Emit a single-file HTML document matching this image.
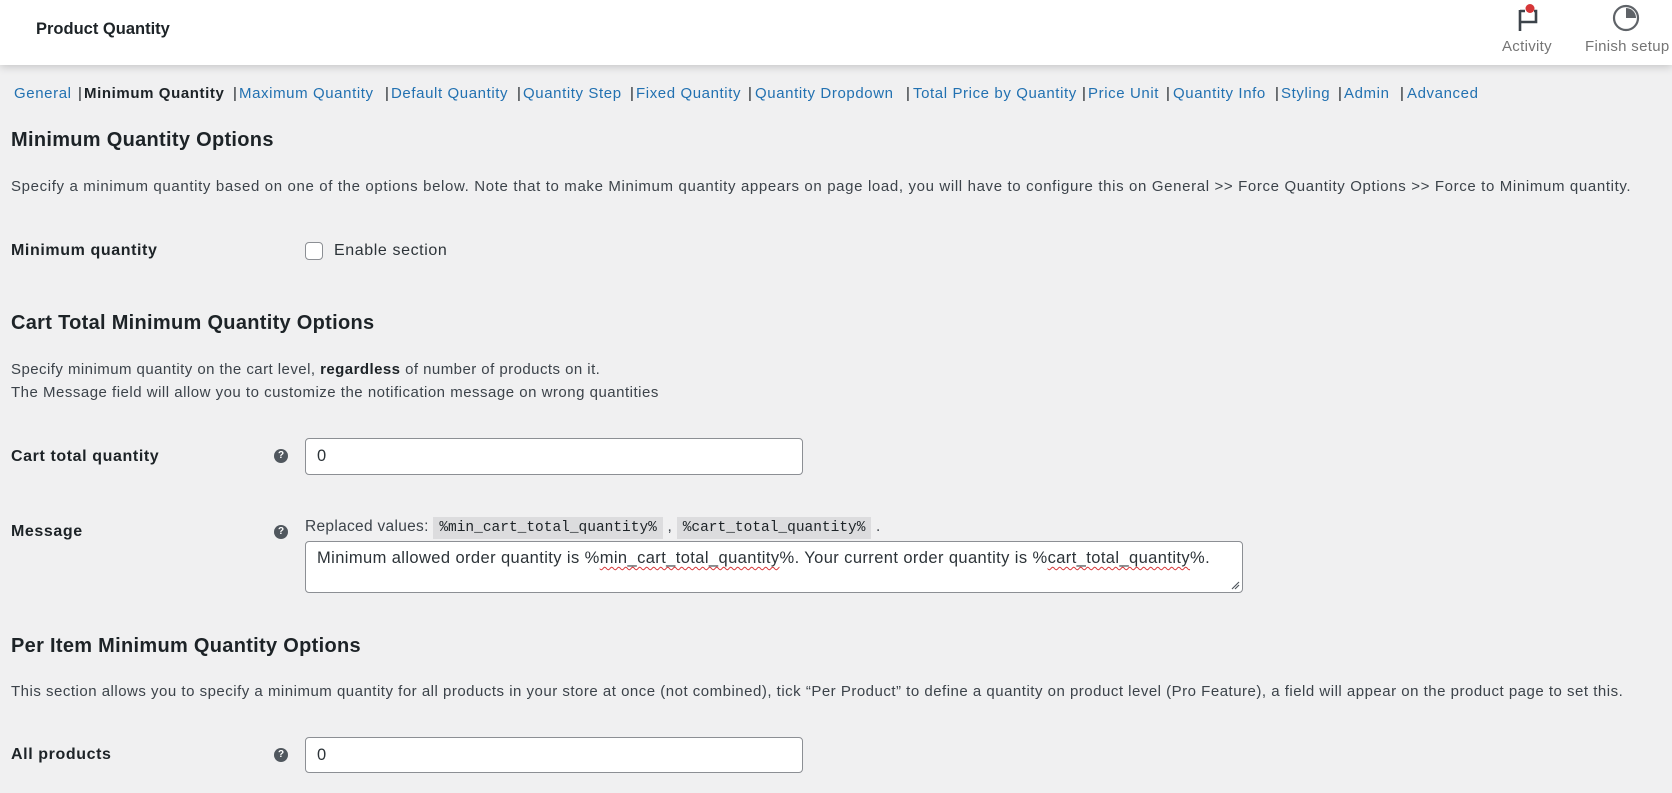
<!DOCTYPE html>
<html><head><meta charset="utf-8">
<style>
*{box-sizing:border-box;margin:0;padding:0}
html,body{width:1672px;height:793px;overflow:hidden;background:#f0f0f1;font-family:"Liberation Sans",sans-serif;color:#1d2327}
.hdr{position:absolute;left:0;top:0;width:1672px;height:65px;background:#fff;box-shadow:0 2px 8px rgba(0,0,0,.18)}
.a{position:absolute;white-space:nowrap}
.title{left:36px;top:20px;font-size:16.5px;font-weight:600;color:#1d2327}
.lbl{font-size:15px;color:#757575;letter-spacing:.3px}
.nav{top:85px;font-size:15px;color:#2271b1;letter-spacing:.6px}
.nav b{color:#1d2327;font-weight:600;letter-spacing:.6px}
.sep{color:#1d2327}
h2{position:absolute;font-size:20px;font-weight:600;white-space:nowrap;letter-spacing:.3px}
.p{font-size:15px;color:#3c434a;letter-spacing:.6px}
.fl{font-size:16px;font-weight:600;letter-spacing:.6px}
.q{position:absolute;width:14px;height:14px;border-radius:50%;background:#50575e;color:#fff;font-size:10px;font-weight:bold;text-align:center;line-height:14px}
.in{position:absolute;background:#fff;border:1px solid #8c8f94;border-radius:4px;font-size:16.5px;padding-left:11px;color:#2c3338;letter-spacing:.4px}
code{font-family:"Liberation Mono",monospace;font-size:14.5px;background:#dcdcde;padding:3px 6px;color:#1d2327;letter-spacing:0}
.sq{text-decoration:underline wavy #d63638;text-underline-offset:3px;text-decoration-thickness:1px}
</style></head><body>
<div class="hdr"></div>
<div class="a title">Product Quantity</div>
<svg class="a" style="left:1515px;top:2px" width="26" height="30" viewBox="0 0 26 30">
<path d="M5 8 V29 M5 9 H10 M5 20 H21 V9 H19" fill="none" stroke="#3c434a" stroke-width="2.6"/>
<circle cx="15" cy="6.5" r="4.5" fill="#d63638"/></svg>
<div class="a lbl" style="left:1502px;top:38px">Activity</div>
<svg class="a" style="left:1612px;top:4px" width="28" height="28" viewBox="0 0 28 28">
<circle cx="14" cy="14" r="12" fill="none" stroke="#5f6368" stroke-width="2.2"/>
<path d="M14 4 A10 10 0 0 1 24 14 H14 Z" fill="#5f6368"/></svg>
<div class="a lbl" style="left:1585px;top:38px">Finish setup</div>

<div class="a nav" style="left:14px">General</div>
<div class="a nav sep" style="left:78px">|</div>
<div class="a nav" style="left:84px"><b>Minimum Quantity</b></div>
<div class="a nav sep" style="left:233px">|</div><div class="a nav" style="left:239px">Maximum Quantity</div>
<div class="a nav sep" style="left:385px">|</div><div class="a nav" style="left:391px">Default Quantity</div>
<div class="a nav sep" style="left:517px">|</div><div class="a nav" style="left:523px">Quantity Step</div>
<div class="a nav sep" style="left:630px">|</div><div class="a nav" style="left:636px">Fixed Quantity</div>
<div class="a nav sep" style="left:748px">|</div><div class="a nav" style="left:755px">Quantity Dropdown</div>
<div class="a nav sep" style="left:906px">|</div><div class="a nav" style="left:913px">Total Price by Quantity</div>
<div class="a nav sep" style="left:1082px">|</div><div class="a nav" style="left:1088px">Price Unit</div>
<div class="a nav sep" style="left:1166px">|</div><div class="a nav" style="left:1173px">Quantity Info</div>
<div class="a nav sep" style="left:1275px">|</div><div class="a nav" style="left:1281px">Styling</div>
<div class="a nav sep" style="left:1338px">|</div><div class="a nav" style="left:1344px">Admin</div>
<div class="a nav sep" style="left:1400px">|</div><div class="a nav" style="left:1407px">Advanced</div>

<h2 style="left:11px;top:129px">Minimum Quantity Options</h2>
<div class="a p" style="left:11px;top:178px;letter-spacing:.64px">Specify a minimum quantity based on one of the options below. Note that to make Minimum quantity appears on page load, you will have to configure this on General &gt;&gt; Force Quantity Options &gt;&gt; Force to Minimum quantity.</div>
<div class="a fl" style="left:11px;top:242px">Minimum quantity</div>
<div class="a" style="left:305px;top:242px;width:18px;height:18px;border:1px solid #8c8f94;border-radius:4px;background:#fff"></div>
<div class="a fl" style="left:334px;top:242px;font-weight:500;color:#2c3338;letter-spacing:.6px">Enable section</div>

<h2 style="left:11px;top:312px">Cart Total Minimum Quantity Options</h2>
<div class="a p" style="left:11px;top:361px;letter-spacing:.45px">Specify minimum quantity on the cart level, <b style="color:#1d2327">regardless</b> of number of products on it.</div>
<div class="a p" style="left:11px;top:384px;letter-spacing:.5px">The Message field will allow you to customize the notification message on wrong quantities</div>

<div class="a fl" style="left:11px;top:448px">Cart total quantity</div>
<div class="q" style="left:274px;top:449px">?</div>
<div class="in" style="left:305px;top:438px;width:498px;height:37px;line-height:35px">0</div>

<div class="a fl" style="left:11px;top:523px">Message</div>
<div class="q" style="left:274px;top:525px">?</div>
<div class="a" style="left:305px;top:518px;font-size:15.5px;color:#3c434a;letter-spacing:.3px">Replaced values: <code>%min_cart_total_quantity%</code> , <code>%cart_total_quantity%</code> .</div>
<div class="in" style="left:305px;top:541px;width:938px;height:52px;padding-top:6px;line-height:20px">Minimum allowed order quantity is %<span class="sq">min_cart_total_quantity</span>%. Your current order quantity is %<span class="sq">cart_total_quantity</span>%.
<svg style="position:absolute;right:2px;bottom:2px" width="9" height="9"><path d="M1 8 L8 1 M4 8 L8 4" stroke="#50575e" stroke-width="1.2"/></svg></div>

<h2 style="left:11px;top:635px">Per Item Minimum Quantity Options</h2>
<div class="a p" style="left:11px;top:683px;letter-spacing:.5px">This section allows you to specify a minimum quantity for all products in your store at once (not combined), tick “Per Product” to define a quantity on product level (Pro Feature), a field will appear on the product page to set this.</div>
<div class="a fl" style="left:11px;top:746px">All products</div>
<div class="q" style="left:274px;top:748px">?</div>
<div class="in" style="left:305px;top:737px;width:498px;height:36px;line-height:34px">0</div>
</body></html>
